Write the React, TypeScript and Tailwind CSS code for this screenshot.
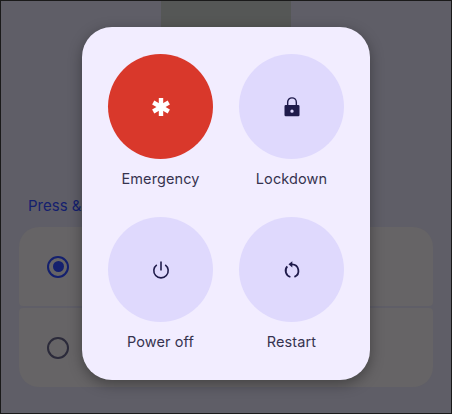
// Power menu dialog over a dimmed settings page

const Asterisk = () => (
  <svg width="20" height="20" viewBox="0 0 20 20" fill="#fff">
    <rect x="7.8" y="1" width="4.4" height="18" />
    <rect x="7.8" y="1" width="4.4" height="18" transform="rotate(60 10 10)" />
    <rect x="7.8" y="1" width="4.4" height="18" transform="rotate(120 10 10)" />
  </svg>
)

const Lock = () => (
  <svg width="20" height="20" viewBox="0 0 24 24" fill="#1f1b4b">
    <path d="M4.5 9.5h15a1.5 1.5 0 0 1 1.5 1.5v10.500a1.500 1.500 0 0 1-1.500 1.500h-15A1.500 1.500 0 0 1 3 21.500V11a1.500 1.500 0 0 1 1.500-1.500Zm7.500 5.500a2 2 0 1 0 0 4 2 2 0 0 0 0-4Z" fillRule="evenodd" />
    <path d="M6.800 10V6.200a5.200 5.200 0 0 1 10.400 0V10" fill="none" stroke="#1f1b4b" strokeWidth="1.700" />
  </svg>
)

const Power = () => (
  <svg width="20" height="20" viewBox="0 0 20 20" fill="none" stroke="#1f1b4b" strokeWidth="1.6">
    <path d="M10 1.500v9" />
    <path d="M5.800 4.800a7.200 7.200 0 1 0 8.400 0" />
  </svg>
)

const Restart = () => (
  <svg width="20" height="20" viewBox="0 0 20 20" fill="none" stroke="#1f1b4b" strokeWidth="1.8">
    <path d="M10 4.300a6.500 6.500 0 0 1 2.400 12.500" />
    <path d="M8.400 17A6.500 6.500 0 0 1 5.300 6.400" />
    <path d="M10.300 1.200 6.500 4.300l3.800 3.100Z" fill="#1f1b4b" stroke="none" />
  </svg>
)

const ACTIONS = [
  { label: 'Emergency', icon: <Asterisk />, circle: 'bg-[#d9382b]' },
  { label: 'Lockdown', icon: <Lock />, circle: 'bg-[#dfd9fd]' },
  { label: 'Power off', icon: <Power />, circle: 'bg-[#dfd9fd]' },
  { label: 'Restart', icon: <Restart />, circle: 'bg-[#dfd9fd]' },
]

export default function App() {
  return (
    <div className="relative w-[452px] h-[414px] overflow-hidden bg-[#5f5e67] border border-[#1a1a1a] font-['Inter',sans-serif]">
      {/* Dimmed page behind */}
      <div className="mx-[160px] h-[27px] bg-[#555756]" />
      <p className="mt-[168px] pl-[27px] text-[15px] leading-5 text-[#14206e]">Press &amp; hold</p>
      <div className="mt-[11px] mx-[18px] flex flex-col gap-[2px]">
        <div className="h-[79px] rounded-t-[20px] rounded-b-[4px] bg-[#666466] flex items-center pl-[28px]">
          <div className="w-[22px] h-[22px] rounded-full border-2 border-[#14206e] flex items-center justify-center">
            <div className="w-[11px] h-[11px] rounded-full bg-[#14206e]" />
          </div>
        </div>
        <div className="h-[79px] rounded-b-[20px] rounded-t-[4px] bg-[#666466] flex items-center pl-[28px]">
          <div className="w-[22px] h-[22px] rounded-full border-2 border-[#2b2a3a]" />
        </div>
      </div>

      {/* Power menu */}
      <div className="absolute left-[81px] top-[26px] w-[288px] h-[353px] rounded-[30px] bg-[#f2edff] shadow-[0_4px_14px_rgba(0,0,0,0.35)] pt-[27px] px-[26px] grid grid-cols-[105px_105px] gap-x-[26px] gap-y-[58px] content-start">
        {ACTIONS.map((a) => (
          <div key={a.label} className="relative">
            <div className={`w-[105px] h-[105px] rounded-full flex items-center justify-center ${a.circle}`}>
              {a.icon}
            </div>
            <p className="absolute top-[115px] -left-[10px] -right-[10px] text-center text-[14.5px] tracking-[0.1px] leading-5 text-[#36334f]">
              {a.label}
            </p>
          </div>
        ))}
      </div>
    </div>
  )
}
